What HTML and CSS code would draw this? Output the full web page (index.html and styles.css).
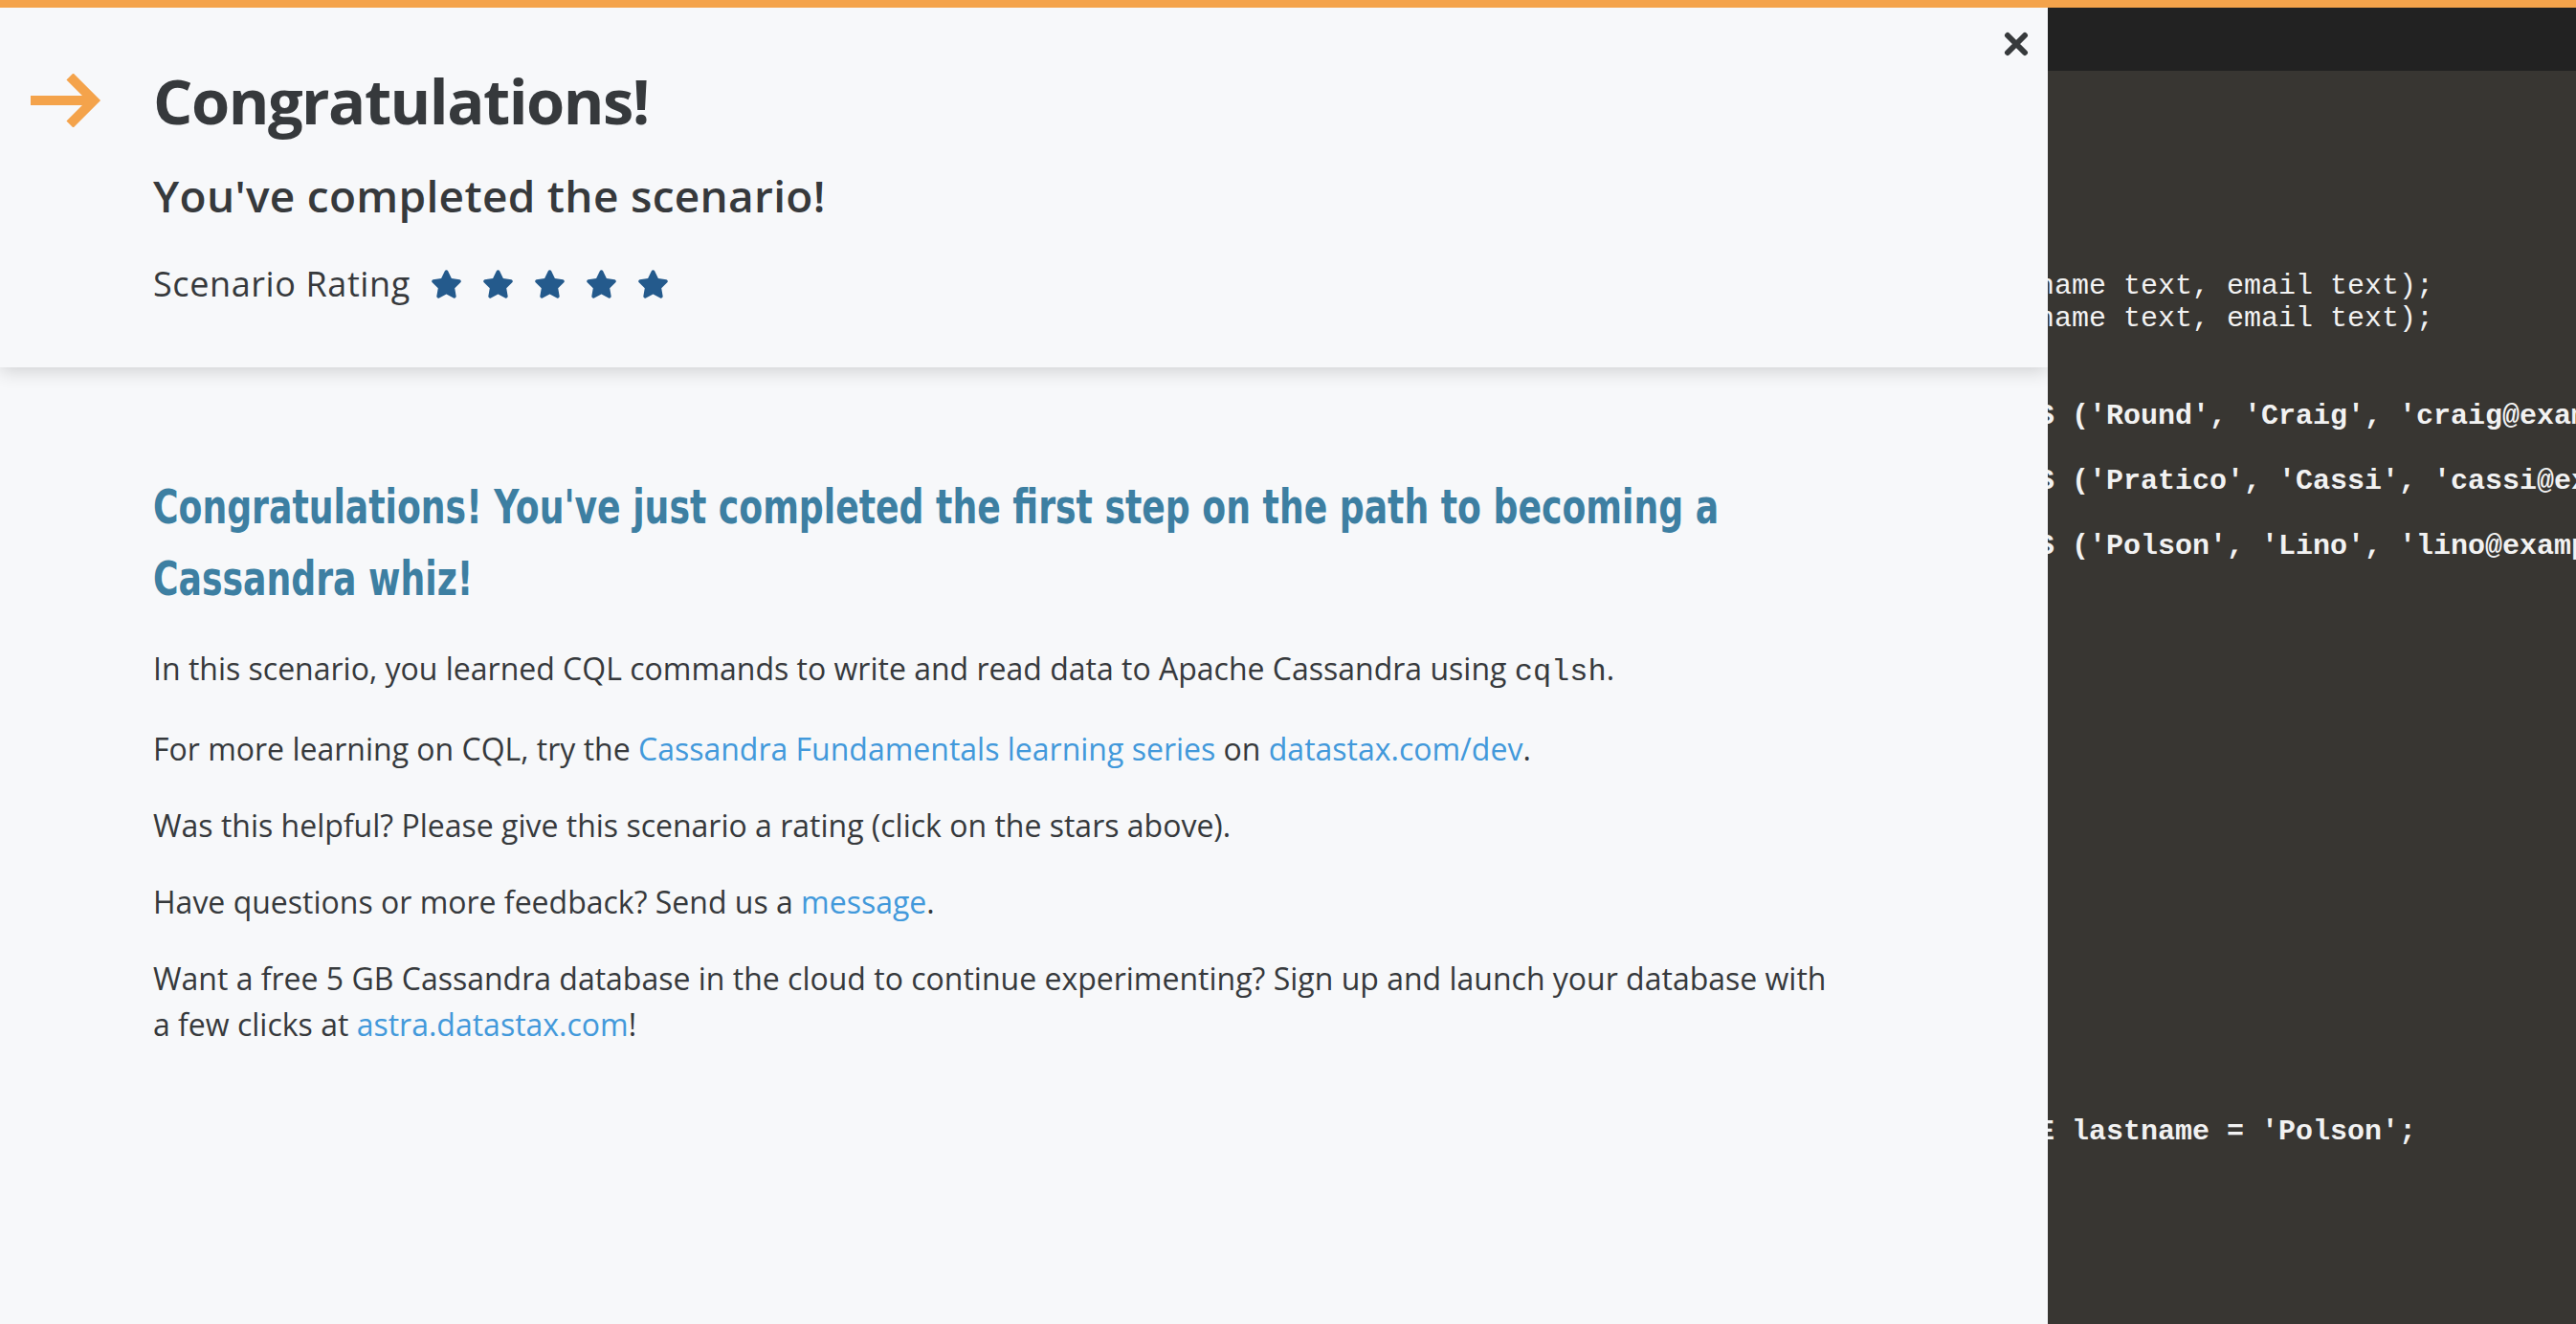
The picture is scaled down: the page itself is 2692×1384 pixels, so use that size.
FILE: index.html
```html
<!DOCTYPE html>
<html lang="en">
<head>
<meta charset="utf-8">
<title>Congratulations!</title>
<link rel="stylesheet" href="styles.css">
</head>
<body>
<div class="topbar"></div>
<div class="main">
  <section class="lesson">
    <button class="close" aria-label="Close">
      <svg viewBox="0 0 26 26" width="26" height="26"><path d="M4 4L22 22M22 4L4 22" stroke="#373a3c" stroke-width="6" stroke-linecap="round" fill="none"/></svg>
    </button>
    <header class="hero">
      <div class="hero-icon">
        <svg viewBox="0 0 74 56" width="74" height="56"><path d="M0 28H64" stroke="#f4a34b" stroke-width="10" fill="none"/><polyline points="41,3 66,28 41,53" stroke="#f4a34b" stroke-width="10" fill="none" stroke-linejoin="miter"/></svg>
      </div>
      <div class="hero-text">
        <h1 class="hero-title">Congratulations!</h1>
        <h2 class="hero-sub">You've completed the scenario!</h2>
        <div class="rating">
          <span class="rating-label">Scenario Rating</span>
          <span class="stars">
            <svg class="star" viewBox="0 0 576 512"><path d="M259.3 17.8L194 150.2 47.9 171.5c-26.2 3.8-36.7 36.1-17.7 54.6l105.7 103-25 145.5c-4.5 26.3 23.2 46 46.4 33.7L288 439.6l130.7 68.7c23.2 12.2 50.9-7.4 46.4-33.7l-25-145.5 105.7-103c19-18.5 8.5-50.8-17.7-54.6L382 150.2 316.7 17.8c-11.7-23.6-45.6-23.9-57.4 0z"/></svg>
            <svg class="star" viewBox="0 0 576 512"><path d="M259.3 17.8L194 150.2 47.9 171.5c-26.2 3.8-36.7 36.1-17.7 54.6l105.7 103-25 145.5c-4.5 26.3 23.2 46 46.4 33.7L288 439.6l130.7 68.7c23.2 12.2 50.9-7.4 46.4-33.7l-25-145.5 105.7-103c19-18.5 8.5-50.8-17.7-54.6L382 150.2 316.7 17.8c-11.7-23.6-45.6-23.9-57.4 0z"/></svg>
            <svg class="star" viewBox="0 0 576 512"><path d="M259.3 17.8L194 150.2 47.9 171.5c-26.2 3.8-36.7 36.1-17.7 54.6l105.7 103-25 145.5c-4.5 26.3 23.2 46 46.4 33.7L288 439.6l130.7 68.7c23.2 12.2 50.9-7.4 46.4-33.7l-25-145.5 105.7-103c19-18.5 8.5-50.8-17.7-54.6L382 150.2 316.7 17.8c-11.7-23.6-45.6-23.9-57.4 0z"/></svg>
            <svg class="star" viewBox="0 0 576 512"><path d="M259.3 17.8L194 150.2 47.9 171.5c-26.2 3.8-36.7 36.1-17.7 54.6l105.7 103-25 145.5c-4.5 26.3 23.2 46 46.4 33.7L288 439.6l130.7 68.7c23.2 12.2 50.9-7.4 46.4-33.7l-25-145.5 105.7-103c19-18.5 8.5-50.8-17.7-54.6L382 150.2 316.7 17.8c-11.7-23.6-45.6-23.9-57.4 0z"/></svg>
            <svg class="star" viewBox="0 0 576 512"><path d="M259.3 17.8L194 150.2 47.9 171.5c-26.2 3.8-36.7 36.1-17.7 54.6l105.7 103-25 145.5c-4.5 26.3 23.2 46 46.4 33.7L288 439.6l130.7 68.7c23.2 12.2 50.9-7.4 46.4-33.7l-25-145.5 105.7-103c19-18.5 8.5-50.8-17.7-54.6L382 150.2 316.7 17.8c-11.7-23.6-45.6-23.9-57.4 0z"/></svg>
          </span>
        </div>
      </div>
    </header>
    <article class="content">
      <h3 class="lead">Congratulations! You've just completed the first step on the path to becoming a Cassandra whiz!</h3>
      <p>In this scenario, you learned CQL commands to write and read data to Apache Cassandra using <code>cqlsh</code>.</p>
      <p>For more learning on CQL, try the <a href="#">Cassandra Fundamentals learning series</a> on <a href="#">datastax.com/dev</a>.</p>
      <p>Was this helpful? Please give this scenario a rating (click on the stars above).</p>
      <p>Have questions or more feedback? Send us a <a href="#">message</a>.</p>
      <p>Want a free 5 GB Cassandra database in the cloud to continue experimenting? Sign up and launch your database with a few clicks at <a href="#">astra.datastax.com</a>!</p>
    </article>
  </section>
  <section class="terminal">
    <div class="term-top"></div>
    <div class="term-body">
      <div class="row row-light">firstname text, email text);</div>
      <div class="row row-light">firstname text, email text);</div>
      <div class="row"> </div>
      <div class="row"> </div>
      <div class="row">VALUES ('Round', 'Craig', 'craig@example.com');</div>
      <div class="row"> </div>
      <div class="row">VALUES ('Pratico', 'Cassi', 'cassi@example.com');</div>
      <div class="row"> </div>
      <div class="row">VALUES ('Polson', 'Lino', 'lino@example.com');</div>
      <div class="row"> </div><div class="row"> </div><div class="row"> </div><div class="row"> </div><div class="row"> </div><div class="row"> </div><div class="row"> </div><div class="row"> </div><div class="row"> </div><div class="row"> </div><div class="row"> </div><div class="row"> </div><div class="row"> </div><div class="row"> </div><div class="row"> </div><div class="row"> </div><div class="row"> </div>
      <div class="row"> WHERE lastname = 'Polson';</div>
    </div>
  </section>
</div>
</body>
</html>
```

FILE: styles.css
```css
* { box-sizing: border-box; }
html, body { margin: 0; padding: 0; }
body {
  width: 2692px;
  height: 1384px;
  overflow: hidden;
  background: #f7f8fa;
  font-family: "Open Sans", "Liberation Sans", sans-serif;
  color: #373a3c;
}
.topbar {
  height: 8px;
  background: #f4a34b;
}
.main {
  display: flex;
  height: 1376px;
}
.lesson {
  position: relative;
  width: 2140px;
  flex: none;
  background: #f7f8fa;
  overflow: hidden;
}
.close {
  position: absolute;
  top: 25px;
  right: 20px;
  width: 26px;
  height: 26px;
  padding: 0;
  border: 0;
  background: none;
  z-index: 2;
}
.close svg { display: block; }

.hero {
  display: flex;
  height: 376px;
  background: #f7f8fa;
  box-shadow: 0 4px 18px rgba(0, 0, 0, 0.16);
  position: relative;
  z-index: 1;
}
.hero-icon {
  width: 160px;
  flex: none;
  padding: 69px 0 0 32px;
}
.hero-icon svg { display: block; }
.hero-text {
  padding-top: 57px;
}
.hero-title {
  margin: 0;
  font-size: 65px;
  line-height: 80px;
  font-weight: 700;
  letter-spacing: -1.5px;
  color: #36393c;
}
.hero-sub {
  margin: 31px 0 0;
  font-size: 46px;
  line-height: 56px;
  font-weight: 600;
  letter-spacing: 0.3px;
  color: #36393c;
}
.rating {
  margin-top: 43px;
  display: flex;
  align-items: center;
  height: 44px;
}
.rating-label {
  font-size: 36px;
  line-height: 44px;
  letter-spacing: 0.6px;
  color: #36393c;
}
.stars {
  display: flex;
  align-items: center;
}
.star {
  width: 33px;
  height: 30px;
  margin-left: 21px;
  fill: #245a8c;
}

.content {
  padding: 109px 0 0 160px;
  max-width: 1920px;
}
.lead {
  width: 2144px;
  margin: 0 0 32px;
  font-family: "DejaVu Sans Condensed", "DejaVu Sans", sans-serif;
  font-size: 49px;
  line-height: 75px;
  font-weight: 700;
  color: #3d7fa2;
  transform: scaleX(0.821);
  transform-origin: 0 0;
}
.content p {
  margin: 0 0 32px;
  font-size: 32px;
  line-height: 48px;
  color: #36393c;
}
.content a {
  color: #4299db;
  text-decoration: none;
}
.content code {
  font-family: "Liberation Mono", monospace;
  font-size: 32px;
}

.terminal {
  flex: 1;
  background: #383632;
  overflow: hidden;
  display: flex;
  flex-direction: column;
}
.term-top {
  height: 66px;
  background: #222222;
  flex: none;
}
.term-body {
  padding-top: 208px;
  margin-left: -101px;
  font-family: "Liberation Mono", monospace;
  font-size: 30px;
  font-weight: 700;
  color: #f2f2f2;
}
.row {
  height: 34px;
  line-height: 34px;
  white-space: pre;
}
.row-light { font-weight: 400; }
```
